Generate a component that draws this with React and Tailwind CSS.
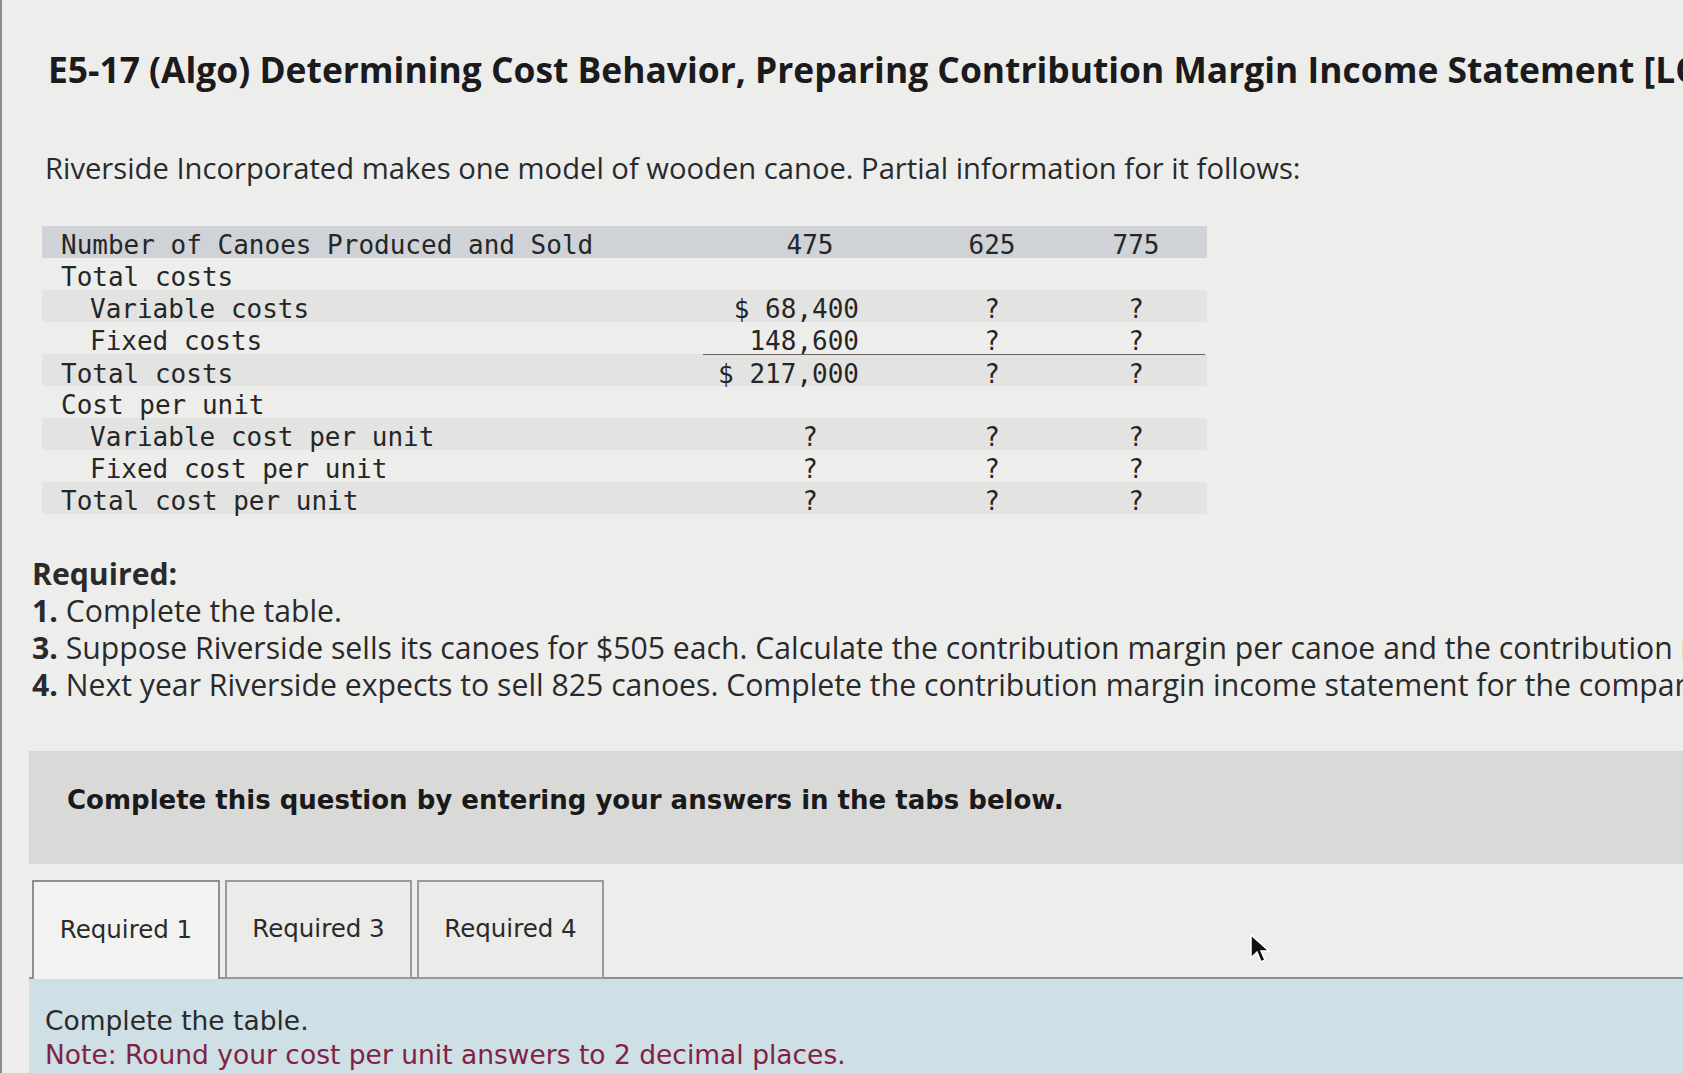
import React from "react";

const mono = { fontFamily: '"DejaVu Sans Mono", "Liberation Mono", monospace' };

function Row({ label, indent, vals, stripe, header, underline }) {
  return (
    <div
      className={`grid grid-cols-[661px_214px_150px_138px] h-[32px] items-center ${
        header ? "bg-[#cfd2d7]" : stripe ? "bg-[#e3e3e2]" : ""
      }`}
    >
      <div className={`pb-[8px] ${indent ? "pl-[48px]" : "pl-[19px]"}`}>{label}</div>
      {vals.map((v, i) => (
        <div
          key={i}
          className={`h-full flex items-center pb-[8px] ${
            underline ? "border-t border-[#6b6161]" : ""
          } ${
            i === 0 && v !== "?" && !header ? "justify-end pr-[58px]" : "justify-center"
          }`}
        >
          <span className="whitespace-pre">{v}</span>
        </div>
      ))}
    </div>
  );
}

export default function App() {
  return (
    <div
      className="relative w-[1683px] h-[1073px] overflow-hidden bg-[#edeeec] text-[#222] border-l-2 border-[#8c8c8c]"
      style={{ fontFamily: '"Open Sans", Lato, "Liberation Sans", sans-serif' }}
    >
      <h1 className="pt-[49px] pl-[46px] text-[35.4px] leading-[40px] font-bold text-[#1b1a1c] whitespace-nowrap">
        E5-17 (Algo) Determining Cost Behavior, Preparing Contribution Margin Income Statement [LO 5-1, 5-2, 5-4]
      </h1>
      <p className="mt-[61px] pl-[43px] text-[29.2px] leading-[36px] text-[#2a2a2c] whitespace-nowrap">
        Riverside Incorporated makes one model of wooden canoe. Partial information for it follows:
      </p>

      <div className="mt-[40px] ml-[40px] w-[1165px] text-[26px] text-[#262626]" style={mono}>
        <Row header label="Number of Canoes Produced and Sold" vals={["475", "625", "775"]} />
        <Row label="Total costs" vals={["", "", ""]} />
        <Row stripe indent label="Variable costs" vals={["$ 68,400", "?", "?"]} />
        <Row indent label="Fixed costs" vals={["148,600", "?", "?"]} />
        <Row stripe underline label="Total costs" vals={["$ 217,000", "?", "?"]} />
        <Row label="Cost per unit" vals={["", "", ""]} />
        <Row stripe indent label="Variable cost per unit" vals={["?", "?", "?"]} />
        <Row indent label="Fixed cost per unit" vals={["?", "?", "?"]} />
        <Row stripe label="Total cost per unit" vals={["?", "?", "?"]} />
      </div>

      <div className="mt-[41px] pl-[30px] text-[30.2px] leading-[37px] text-[#2a2a2c] whitespace-nowrap">
        <div className="font-bold">Required:</div>
        <div>
          <span className="font-bold">1.</span> Complete the table.
        </div>
        <div>
          <span className="font-bold">3.</span> Suppose Riverside sells its canoes for $505 each. Calculate the contribution margin per canoe and the contribution margin ratio.
        </div>
        <div>
          <span className="font-bold">4.</span> Next year Riverside expects to sell 825 canoes. Complete the contribution margin income statement for the company.
        </div>
      </div>

      <div
        className="mt-[48px] ml-[27px] h-[113px] bg-[#d9d9d7] pl-[38px] pt-[32px]"
        style={{ fontFamily: '"DejaVu Sans", Verdana, sans-serif' }}
      >
        <div className="text-[26px] leading-[34px] font-bold text-[#1a1a1a] whitespace-nowrap">
          Complete this question by entering your answers in the tabs below.
        </div>
      </div>

      <div className="mt-[16px] ml-[27px]" style={{ fontFamily: '"DejaVu Sans", Verdana, sans-serif' }}>
        <div className="flex items-end h-[99px]">
          <div className="w-[3px] h-full border-b-2 border-[#8f8f8f]" />
          <div className="w-[188px] h-full flex items-center justify-center bg-[#f2f2f0] border-2 border-b-0 border-[#8f8f8f] text-[24.5px] text-[#2a2a2a]">
            Required 1
          </div>
          <div className="w-[5px] h-full border-b-2 border-[#8f8f8f]" />
          <div className="w-[187px] h-full flex items-center justify-center bg-[#ebebe9] border-2 border-[#9a9a9a] text-[24.5px] text-[#2a2a2a]">
            Required 3
          </div>
          <div className="w-[5px] h-full border-b-2 border-[#8f8f8f]" />
          <div className="w-[187px] h-full flex items-center justify-center bg-[#ebebe9] border-2 border-[#9a9a9a] text-[24.5px] text-[#2a2a2a]">
            Required 4
          </div>
          <div className="flex-1 h-full border-b-2 border-[#8f8f8f]" />
        </div>
        <div className="h-[120px] bg-[#cedfe5] pl-[16px] pt-[25px] text-[26.5px] leading-[34px]">
          <div className="text-[#2a2a2a]">Complete the table.</div>
          <div className="text-[#822243]">Note: Round your cost per unit answers to 2 decimal places.</div>
        </div>
      </div>

      <svg
        className="absolute left-[1248px] top-[934px]"
        width="22"
        height="32"
        viewBox="0 0 22 32"
      >
        <path d="M1 1 L1 24 L7 18 L11 28 L15 26 L11 17 L19 17 Z" fill="#111" stroke="#fff" strokeWidth="1.5" />
      </svg>
    </div>
  );
}
